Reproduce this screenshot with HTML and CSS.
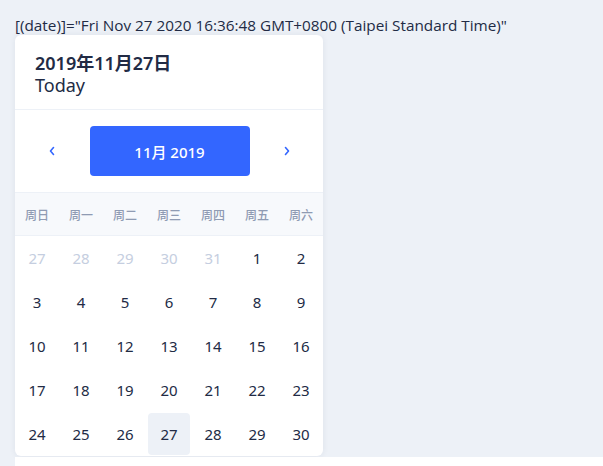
FILE: index.html
```html
<!DOCTYPE html>
<html lang="zh">
<head>
<meta charset="utf-8">
<link rel="stylesheet" href="styles.css">
</head>
<body>
<div class="page">
  <div class="binding">[(date)]="Fri Nov 27 2020 16:36:48 GMT+0800 (Taipei Standard Time)"</div>
  <div class="calendar">
    <div class="header">
      <div class="title">2019年11月27日</div>
      <div class="subtitle">Today</div>
    </div>
    <div class="nav">
      <button class="arrow" aria-label="prev"><svg width="8" height="10" viewBox="0 0 8 10"><path d="M5.5 1.5 L2.5 5 L5.5 8.5" fill="none" stroke="#3366ff" stroke-width="1.6" stroke-linecap="round" stroke-linejoin="round"/></svg></button>
      <button class="period">11月 2019</button>
      <button class="arrow" aria-label="next"><svg width="8" height="10" viewBox="0 0 8 10"><path d="M2.5 1.5 L5.5 5 L2.5 8.5" fill="none" stroke="#3366ff" stroke-width="1.6" stroke-linecap="round" stroke-linejoin="round"/></svg></button>
    </div>
    <div class="weekdays">
      <span>周日</span><span>周一</span><span>周二</span><span>周三</span><span>周四</span><span>周五</span><span>周六</span>
    </div>
    <div class="days">
      <span class="muted">27</span><span class="muted">28</span><span class="muted">29</span><span class="muted">30</span><span class="muted">31</span><span>1</span><span>2</span>
      <span>3</span><span>4</span><span>5</span><span>6</span><span>7</span><span>8</span><span>9</span>
      <span>10</span><span>11</span><span>12</span><span>13</span><span>14</span><span>15</span><span>16</span>
      <span>17</span><span>18</span><span>19</span><span>20</span><span>21</span><span>22</span><span>23</span>
      <span>24</span><span>25</span><span>26</span><span class="today">27</span><span>28</span><span>29</span><span>30</span>
    </div>
  </div>
  <div class="next-block"></div>
</div>
</body>
</html>
```

FILE: styles.css
```css
html, body {
  margin: 0;
  padding: 0;
  background: #edf1f7;
}
body {
  font-family: "Open Sans", "Noto Sans", "Noto Sans CJK SC", sans-serif;
  color: #222b45;
  overflow: hidden;
}
.page {
  padding: 15px 0 0 15px;
}
.binding {
  font-size: 15.3px;
  line-height: 20px;
  color: #222b45;
  white-space: nowrap;
}
.calendar {
  width: 308px;
  background: #fff;
  border-radius: 6px;
  box-shadow: 0 0 6px rgba(44, 51, 73, 0.08);
  overflow: hidden;
}
.header {
  padding: 17px 20px 13px;
  border-bottom: 1px solid #edf1f7;
}
.title {
  font-family: "Noto Sans", "Noto Sans CJK SC", sans-serif;
  font-size: 18px;
  font-weight: 600;
  line-height: 22px;
}
.subtitle {
  font-family: "Noto Sans", "Noto Sans CJK SC", sans-serif;
  font-size: 18px;
  line-height: 22px;
  font-weight: 400;
}
.nav {
  display: flex;
  align-items: center;
  justify-content: space-between;
  padding: 16px 22px 16px 23px;
}
.arrow {
  border: 0;
  background: none;
  width: 28px;
  height: 28px;
  padding: 0;
  display: flex;
  align-items: center;
  justify-content: center;
}
.period {
  width: 160px;
  height: 50px;
  border: 0;
  border-radius: 4px;
  background: #3366ff;
  color: #fff;
  font-family: "Noto Sans", "Noto Sans CJK SC", sans-serif;
  font-size: 15px;
  font-weight: 500;
}
.weekdays {
  display: grid;
  grid-template-columns: repeat(7, 44px);
  height: 42px;
  align-items: center;
  background: #f7f9fc;
  border-top: 1px solid #edf1f7;
  border-bottom: 1px solid #edf1f7;
}
.weekdays span {
  text-align: center;
  font-family: "Noto Sans CJK SC", sans-serif;
  font-size: 12px;
  font-weight: 500;
  color: #8f9bb3;
}
.days {
  display: grid;
  grid-template-columns: repeat(7, 44px);
  grid-auto-rows: 44px;
}
.days span {
  display: flex;
  align-items: center;
  justify-content: center;
  margin: 1px;
  border-radius: 4px;
  font-family: "Noto Sans", sans-serif;
  font-size: 15px;
  color: #222b45;
}
.days .muted {
  color: #c5cee0;
}
.days .today {
  background: #edf1f7;
}
.next-block {
  height: 20px;
  background: #fff;
  margin-top: 1px;
}
```
